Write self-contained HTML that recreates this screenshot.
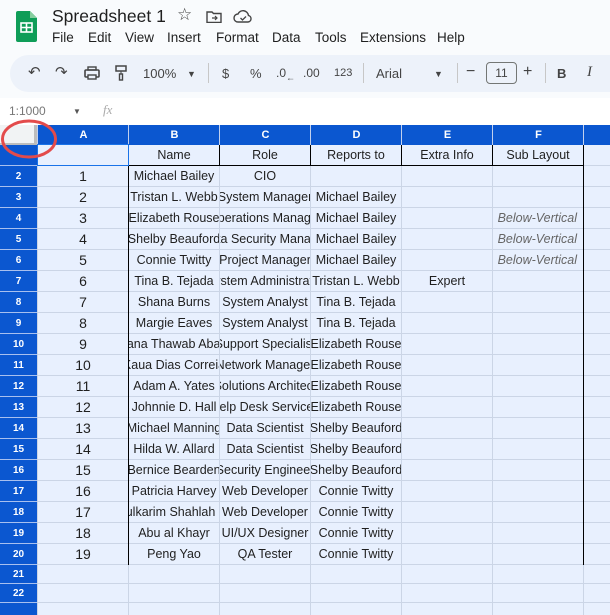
<!DOCTYPE html>
<html><head><meta charset="utf-8"><style>
*{margin:0;padding:0;box-sizing:border-box}
body{width:610px;height:605px;overflow:hidden;background:#f9fbfd;font-family:"Liberation Sans",Arial,sans-serif;position:relative;color:#1f1f1f}
.abs{position:absolute}
.menu span{position:absolute;top:30px;font-size:13.5px;color:#1f1f1f}
.tb{position:absolute;left:10px;top:55px;width:620px;height:37px;background:#edf2fa;border-radius:19px}
.ic{position:absolute;font-size:13px;color:#444;top:66px}
#grid{position:absolute;left:0;top:125px}
.cell{position:absolute;height:21px;line-height:21px;font-size:12.5px;text-align:center;overflow:hidden;white-space:nowrap;color:#1f1f1f}
</style></head><body>
<svg class="abs" style="left:16px;top:11px" width="21" height="31" viewBox="0 0 21 31"><path d="M2 0h12l7 7v22a2 2 0 0 1-2 2H2a2 2 0 0 1-2-2V2a2 2 0 0 1 2-2z" fill="#0f9d58"/><path d="M14 0v7h7z" fill="#87ce9f"/><rect x="5" y="12" width="11" height="9" fill="none" stroke="#fff" stroke-width="1.6"/><path d="M5 16.5h11M10.5 12v9" stroke="#fff" stroke-width="1.6"/></svg>
<div class="abs" style="left:52px;top:6px;font-size:17.5px;color:#1f1f1f">Spreadsheet 1</div>
<div class="abs" style="left:177px;top:5px;font-size:17px;color:#444">☆</div>
<svg class="abs" style="left:206px;top:10px" width="16" height="13"><path d="M1 2h5l1.5 1.5H15v9H1z" fill="none" stroke="#444" stroke-width="1.4"/><path d="M6 8h5M9 6l2 2-2 2" stroke="#444" stroke-width="1.2" fill="none"/></svg>
<svg class="abs" style="left:233px;top:9px" width="20" height="14"><path d="M5 13a4 4 0 0 1 0-8 5.5 5.5 0 0 1 10.5 1.5A3.3 3.3 0 0 1 15 13z" fill="none" stroke="#444" stroke-width="1.4"/><path d="M7.5 9l2 2 3.5-3.5" stroke="#444" stroke-width="1.3" fill="none"/></svg>
<div class="menu"><span style="left:52px">File</span><span style="left:88px">Edit</span><span style="left:125px">View</span><span style="left:167px">Insert</span><span style="left:216px">Format</span><span style="left:272px">Data</span><span style="left:315px">Tools</span><span style="left:360px">Extensions</span><span style="left:437px">Help</span></div>
<div class="tb"></div>
<div class="ic" style="left:28px;font-size:15px;top:63px">↶</div>
<div class="ic" style="left:55px;font-size:15px;top:63px">↷</div>
<svg class="abs" style="left:84px;top:66px" width="16" height="14"><rect x="1" y="4" width="14" height="7" rx="1" fill="none" stroke="#444" stroke-width="1.6"/><rect x="4" y="1" width="8" height="3" fill="none" stroke="#444" stroke-width="1.4"/><rect x="4" y="9" width="8" height="4" fill="#edf2fa" stroke="#444" stroke-width="1.4"/></svg>
<svg class="abs" style="left:115px;top:65px" width="12" height="16"><rect x="1" y="1" width="10" height="5" fill="none" stroke="#444" stroke-width="1.5"/><path d="M6 6v3h-0M6 9v0" stroke="#444"/><rect x="4.5" y="9" width="3" height="6" fill="none" stroke="#444" stroke-width="1.4"/></svg>
<div class="ic" style="left:143px;top:66px">100%</div>
<div class="ic" style="left:187px;top:66px;font-size:9px;top:69px">▼</div>
<div class="abs" style="left:208px;top:63px;width:1px;height:20px;background:#c7c7c7"></div>
<div class="ic" style="left:222px">$</div>
<div class="ic" style="left:250px">%</div>
<div class="ic" style="left:276px;font-size:12px">.0<sub style="font-size:9px">←</sub></div>
<div class="ic" style="left:303px;font-size:12px">.00<sub style="font-size:9px"></sub></div>
<div class="ic" style="left:334px;font-size:11px;top:67px">123</div>
<div class="abs" style="left:363px;top:63px;width:1px;height:20px;background:#c7c7c7"></div>
<div class="ic" style="left:376px">Arial</div>
<div class="ic" style="left:434px;font-size:9px;top:69px">▼</div>
<div class="abs" style="left:457px;top:63px;width:1px;height:20px;background:#c7c7c7"></div>
<div class="ic" style="left:466px;font-size:16px;top:63px">−</div>
<div class="abs" style="left:486px;top:62px;width:31px;height:22px;border:1px solid #747775;border-radius:4px;font-size:12px;text-align:center;line-height:20px;color:#444">11</div>
<div class="ic" style="left:523px;font-size:16px;top:63px">+</div>
<div class="abs" style="left:545px;top:63px;width:1px;height:20px;background:#c7c7c7"></div>
<div class="ic" style="left:557px;font-weight:bold">B</div>
<div class="ic" style="left:587px;font-style:italic;font-family:'Liberation Serif',serif;font-size:15px;top:64px">I</div>
<div class="abs" style="left:0;top:98px;width:610px;height:27px;background:#fff"></div>
<div class="abs" style="left:9px;top:104px;font-size:12px;color:#777">1:1000</div>
<div class="abs" style="left:73px;top:107px;font-size:8px;color:#555">▼</div>
<div class="abs" style="left:103px;top:102px;font-size:13px;color:#aaa;font-style:italic;font-family:'Liberation Serif',serif">fx</div>
<div id="grid"></div>
<svg class="abs" style="left:0;top:118px" width="70" height="46"><ellipse cx="29" cy="21" rx="26.5" ry="18" fill="none" stroke="#e34b4b" stroke-width="3"/></svg>
<script>
const g=document.getElementById('grid');
const colX=[0,38,129,220,311,402,493,584,640];
const letters=['','A','B','C','D','E','F',''];
let h='';
// header row
h+=`<div class="abs" style="left:0;top:0;width:640px;height:20px;background:#0b57d0"></div>`;
h+=`<div class="abs" style="left:0;top:0;width:37px;height:21px;background:#f1f3f4;border-right:3px solid #bdbdbd;border-bottom:3px solid #bdbdbd"></div>`;
for(let i=1;i<8;i++){h+=`<div class="abs" style="left:${colX[i]-1}px;top:0;width:1px;height:20px;background:#c2d0ee"></div>`;
h+=`<div class="abs" style="left:${colX[i]}px;top:0;width:${colX[i+1]-colX[i]}px;height:20px;line-height:20px;text-align:center;color:#fff;font-weight:bold;font-size:11px">${letters[i]}</div>`;}
// body
const rows=[["","Name","Role","Reports to","Extra Info","Sub Layout"],
["1","Michael Bailey","CIO","","",""],
["2","Tristan L. Webb","System Manager","Michael Bailey","",""],
["3","Elizabeth Rouse","Operations Manager","Michael Bailey","","Below-Vertical"],
["4","Shelby Beauford","Data Security Manager","Michael Bailey","","Below-Vertical"],
["5","Connie Twitty","Project Manager","Michael Bailey","","Below-Vertical"],
["6","Tina B. Tejada","System Administrator","Tristan L. Webb","Expert",""],
["7","Shana Burns","System Analyst","Tina B. Tejada","",""],
["8","Margie Eaves","System Analyst","Tina B. Tejada","",""],
["9","Dana Thawab Abadi","Support Specialist","Elizabeth Rouse","",""],
["10","Kaua Dias Correia","Network Manager","Elizabeth Rouse","",""],
["11","Adam A. Yates","Solutions Architect","Elizabeth Rouse","",""],
["12","Johnnie D. Hall","Help Desk Services","Elizabeth Rouse","",""],
["13","Michael Manning","Data Scientist","Shelby Beauford","",""],
["14","Hilda W. Allard","Data Scientist","Shelby Beauford","",""],
["15","Bernice Bearden","Security Engineer","Shelby Beauford","",""],
["16","Patricia Harvey","Web Developer","Connie Twitty","",""],
["17","Abdulkarim Shahlah Bakr","Web Developer","Connie Twitty","",""],
["18","Abu al Khayr","UI/UX Designer","Connie Twitty","",""],
["19","Peng Yao","QA Tester","Connie Twitty","",""],
["","","","","",""],["","","","","",""]];
h+=`<div class="abs" style="left:37px;top:20px;width:603px;height:470px;background:#e8f0fe"></div>`;
h+=`<div class="abs" style="left:0;top:20px;width:37px;height:470px;background:#0b57d0"></div>`;
h+=`<div class="abs" style="left:37px;top:20px;width:1px;height:470px;background:#1a73e8"></div>`;
let y=20;
for(let r=0;r<rows.length;r++){
 const rh=r>=20?19:21;
 // grid line bottom
 h+=`<div class="abs" style="left:0;top:${y+rh-1}px;width:37px;height:1px;background:#a8c0ef"></div>`;
 h+=`<div class="abs" style="left:38px;top:${y+rh-1}px;width:600px;height:1px;background:#cbd5e6"></div>`;
 if(r>0)h+=`<div class="abs" style="left:0;top:${y}px;width:37px;height:${rh}px;line-height:${rh}px;text-align:center;color:#fff;font-weight:bold;font-size:10px">${r+1}</div>`;
 for(let c=0;c<6;c++){
  const x=colX[c+1],w=colX[c+2]-colX[c+1];
  let t=rows[r][c],st='';
  if(c==0)st='font-size:14px;';
  if(c==5&&r>0)st='text-align:right;padding-right:6px;font-style:italic;color:#666;';
  if(t){const mid=x+w/2;h+=`<div class="cell" style="left:${x}px;top:${y}px;width:${w-1}px;height:${rh}px;line-height:${rh}px;${st}"><span style="display:inline-block;${c>0&&c<5?'width:300px;margin-left:-105px;':''}">${t}</span></div>`;}
 }
 y+=rh;
}
for(let i=1;i<8;i++)h+=`<div class="abs" style="left:${colX[i]-1}px;top:20px;width:1px;height:470px;background:#cbd5e6"></div>`;
// row1 black borders
for(let i=3;i<7;i++)h+=`<div class="abs" style="left:${colX[i]-1}px;top:20px;width:1px;height:21px;background:#000"></div>`;
h+=`<div class="abs" style="left:128px;top:40px;width:456px;height:1px;background:#000"></div>`;
h+=`<div class="abs" style="left:128px;top:20px;width:1px;height:420px;background:#000"></div>`;
h+=`<div class="abs" style="left:583px;top:20px;width:1px;height:420px;background:#000"></div>`;
// A1 active
h+=`<div class="abs" style="left:37px;top:19px;width:92px;height:22px;border:1px solid #1a73e8"></div>`;
g.innerHTML=h;
</script>
</body></html>
